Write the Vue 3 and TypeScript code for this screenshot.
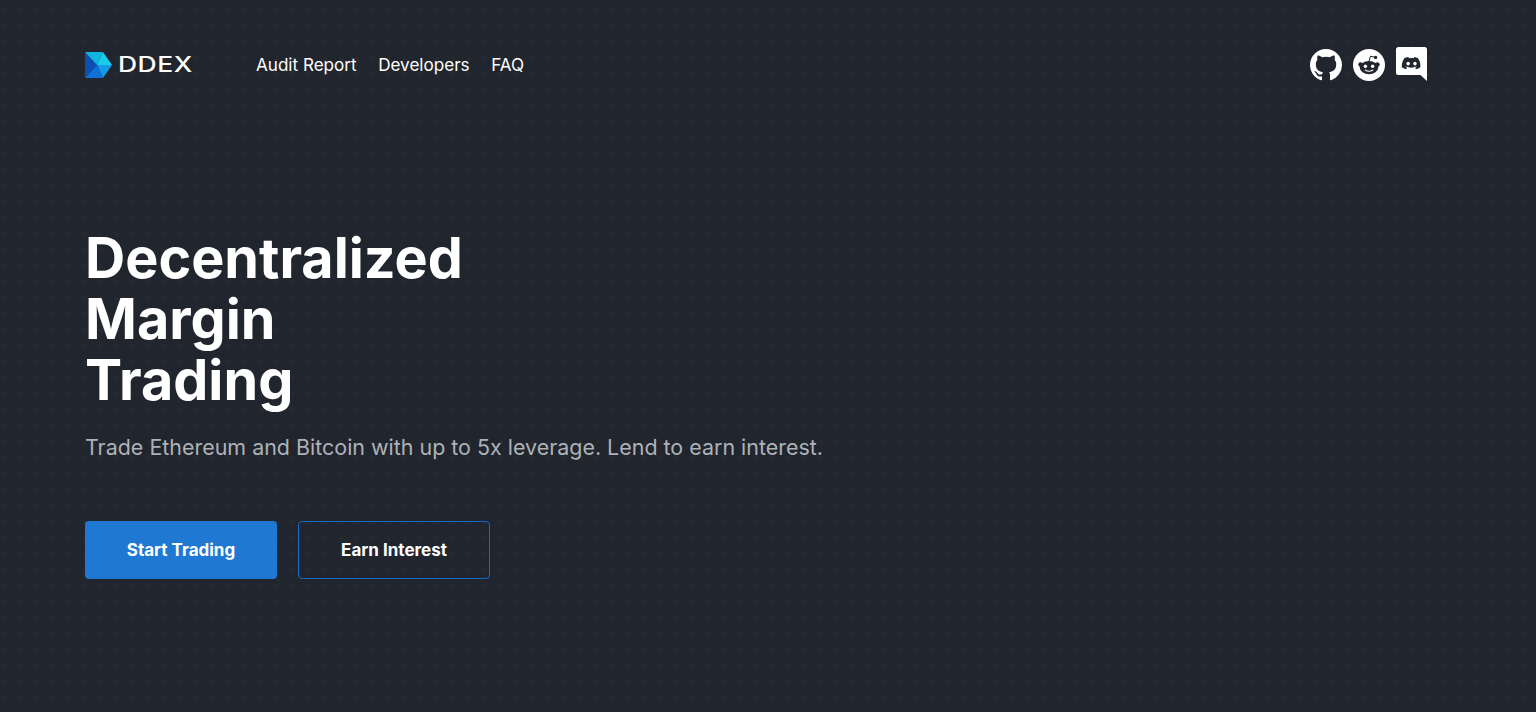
<template>
  <div class="page">
    <header class="top">
      <div class="left">
        <a class="logo">
          <svg class="mark" viewBox="0 0 27 26" width="27" height="26">
            <polygon points="0,0 12,13 0,26" fill="#0b4fb0" />
            <polygon points="0,0 18,0 12,13" fill="#0fb4e0" />
            <polygon points="18,0 27,13 12,13" fill="#17cdea" />
            <polygon points="12,13 27,13 18,26" fill="#149be8" />
            <polygon points="0,26 12,13 18,26" fill="#0f70d8" />
          </svg>
          <span class="word">DDEX</span>
        </a>
        <nav class="links">
          <a v-for="link in links" :key="link">{{ link }}</a>
        </nav>
      </div>
      <div class="social">
        <svg viewBox="0 0 16 16" width="32" height="32">
          <path fill="#fff" d="M8 0C3.58 0 0 3.58 0 8c0 3.54 2.29 6.53 5.47 7.59.4.07.55-.17.55-.38 0-.19-.01-.82-.01-1.49-2.01.37-2.53-.49-2.69-.94-.09-.23-.48-.94-.82-1.13-.28-.15-.68-.52-.01-.53.63-.01 1.08.58 1.23.82.72 1.21 1.87.87 2.33.66.07-.52.28-.87.51-1.07-1.78-.2-3.64-.89-3.64-3.95 0-.87.31-1.59.82-2.15-.08-.2-.36-1.02.08-2.12 0 0 .67-.21 2.2.82.64-.18 1.32-.27 2-.27.68 0 1.36.09 2 .27 1.53-1.04 2.2-.82 2.2-.82.44 1.1.16 1.92.08 2.12.51.56.82 1.27.82 2.15 0 3.07-1.87 3.75-3.65 3.95.29.25.54.73.54 1.48 0 1.07-.01 1.93-.01 2.2 0 .21.15.46.55.38A8.013 8.013 0 0016 8c0-4.42-3.58-8-8-8z" />
        </svg>
        <svg viewBox="0 0 32 32" width="32" height="32">
          <circle cx="16" cy="16" r="16" fill="#fff" />
          <ellipse cx="16" cy="18.6" rx="9.2" ry="6.6" fill="#21252d" />
          <circle cx="7.6" cy="15.6" r="2.3" fill="#21252d" />
          <circle cx="24.4" cy="15.6" r="2.3" fill="#21252d" />
          <path d="M16 12.5 L17.4 7.2 L22 8.3" fill="none" stroke="#21252d" stroke-width="1" />
          <circle cx="22.6" cy="8.4" r="1.7" fill="#21252d" />
          <circle cx="12.4" cy="17.2" r="1.7" fill="#fff" />
          <circle cx="19.6" cy="17.2" r="1.7" fill="#fff" />
          <path d="M12.2 21 Q16 23.6 19.8 21" fill="none" stroke="#fff" stroke-width="1.1" stroke-linecap="round" />
        </svg>
        <svg class="discord" viewBox="0 0 31 34" width="31" height="34">
          <path fill="#fff" d="M2.5 0h26A2.5 2.5 0 0 1 31 2.5V34l-6.5-6H2.5A2.5 2.5 0 0 1 0 25.500V2.500A2.500 2.500 0 0 1 2.500 0z" />
          <g transform="translate(1.6 2.7) scale(.9)">
            <path fill="#21252d" d="M11.500 8.200c-1.500.3-2.900.7-4.100 1.400C5.300 12.800 4.400 16.200 4.700 19.500c1.600 1.200 3.200 1.900 4.800 2.300l1.100-1.800c-.6-.2-1.200-.5-1.700-.9l.4-.3c3.600 1.600 7.700 1.600 11.400 0l.4.3c-.5.400-1.100.7-1.700.9l1.100 1.800c1.600-.4 3.200-1.100 4.800-2.300.4-3.900-.7-7.200-2.700-9.900-1.200-.7-2.600-1.100-4.100-1.400l-.6 1.200c-1.500-.2-3-.2-4.500 0z" />
            <ellipse cx="11.700" cy="15.400" rx="1.900" ry="2.100" fill="#fff" />
            <ellipse cx="19.300" cy="15.400" rx="1.900" ry="2.100" fill="#fff" />
          </g>
        </svg>
      </div>
    </header>

    <section class="hero">
      <h1>Decentralized<br />Margin<br />Trading</h1>
      <p>Trade Ethereum and Bitcoin with up to 5x leverage. Lend to earn interest.</p>
      <div class="actions">
        <a class="btn primary">Start Trading</a>
        <a class="btn outline">Earn Interest</a>
      </div>
    </section>
  </div>
</template>

<script setup lang="ts">
const links: string[] = ['Audit Report', 'Developers', 'FAQ'];
</script>

<style>
html, body {
  margin: 0;
  background: #21252d;
}
</style>

<style scoped>
.page {
  height: 712px;
  overflow: hidden;
  box-sizing: border-box;
  padding: 47px 109px 0 85px;
  background-color: #21252d;
  background-image: radial-gradient(circle, #262a33 1.4px, transparent 2.6px);
  background-size: 16px 16px;
  background-position: -3px 2.5px;
  font-family: Inter, "Liberation Sans", sans-serif;
  color: #fff;
}

.top {
  display: flex;
  justify-content: space-between;
  height: 34px;
}

.left {
  display: flex;
  align-items: center;
  gap: 64px;
  margin-top: 2px;
}

.logo {
  display: flex;
  align-items: center;
  gap: 6px;
  width: 107px;
}

.word {
  display: inline-block;
  font-size: 21px;
  font-weight: 500;
  letter-spacing: 0.4px;
  line-height: 26px;
  transform: scaleX(1.26);
  transform-origin: left center;
}

.links {
  display: flex;
  gap: 21.5px;
  font-size: 17.1px;
  line-height: 24px;
}

.social {
  display: flex;
  align-items: flex-end;
  gap: 11px;
}

.hero {
  padding-top: 146px;
}

h1 {
  margin: 0;
  font-size: 55.7px;
  font-weight: 700;
  line-height: 61px;
}

p {
  margin: 19px 0 0;
  font-size: 21.44px;
  line-height: 36px;
  color: #aeb2b7;
}

.actions {
  display: flex;
  gap: 21px;
  margin-top: 56px;
}

.btn {
  box-sizing: border-box;
  display: flex;
  align-items: center;
  justify-content: center;
  width: 192px;
  height: 58px;
  border-radius: 4px;
  font-size: 17px;
  font-weight: 700;
}

.primary {
  background: #1f78d1;
}

.outline {
  border: 1px solid #1767c4;
}
</style>
